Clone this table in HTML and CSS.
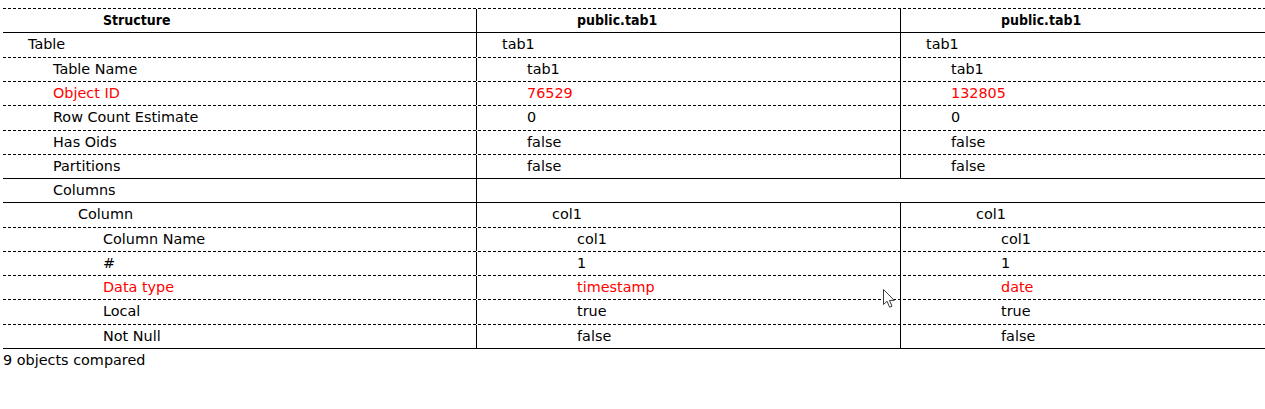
FILE: index.html
```html
<!DOCTYPE html>
<html>
<head>
<meta charset="utf-8">
<link rel="stylesheet" href="styles.css">
</head>
<body>
<div class="grid">
  <div class="row head solid">
    <div class="c c1">Structure</div>
    <div class="c c2">public.tab1</div>
    <div class="c c3">public.tab1</div>
  </div>
  <div class="row tall dashed">
    <div class="c c1 l1">Table</div>
    <div class="c c2 l1">tab1</div>
    <div class="c c3 l1">tab1</div>
  </div>
  <div class="row dashed">
    <div class="c c1 l2">Table Name</div>
    <div class="c c2 l2">tab1</div>
    <div class="c c3 l2">tab1</div>
  </div>
  <div class="row dashed diff">
    <div class="c c1 l2">Object ID</div>
    <div class="c c2 l2">76529</div>
    <div class="c c3 l2">132805</div>
  </div>
  <div class="row tall dashed">
    <div class="c c1 l2">Row Count Estimate</div>
    <div class="c c2 l2">0</div>
    <div class="c c3 l2">0</div>
  </div>
  <div class="row dashed">
    <div class="c c1 l2">Has Oids</div>
    <div class="c c2 l2">false</div>
    <div class="c c3 l2">false</div>
  </div>
  <div class="row solid">
    <div class="c c1 l2">Partitions</div>
    <div class="c c2 l2">false</div>
    <div class="c c3 l2">false</div>
  </div>
  <div class="row solid">
    <div class="c c1 l2">Columns</div>
    <div class="c c23"></div>
  </div>
  <div class="row tall dashed">
    <div class="c c1 l3">Column</div>
    <div class="c c2 l3">col1</div>
    <div class="c c3 l3">col1</div>
  </div>
  <div class="row dashed">
    <div class="c c1 l4">Column Name</div>
    <div class="c c2 l4">col1</div>
    <div class="c c3 l4">col1</div>
  </div>
  <div class="row dashed">
    <div class="c c1 l4">#</div>
    <div class="c c2 l4">1</div>
    <div class="c c3 l4">1</div>
  </div>
  <div class="row dashed diff">
    <div class="c c1 l4">Data type</div>
    <div class="c c2 l4">timestamp</div>
    <div class="c c3 l4">date</div>
  </div>
  <div class="row tall dashed">
    <div class="c c1 l4">Local</div>
    <div class="c c2 l4">true</div>
    <div class="c c3 l4">true</div>
  </div>
  <div class="row solid">
    <div class="c c1 l4">Not Null</div>
    <div class="c c2 l4">false</div>
    <div class="c c3 l4">false</div>
  </div>
</div>
<div class="footer">9 objects compared</div>
<svg class="cursor" width="16" height="22" viewBox="0 0 16 22"><path d="M1.5 1.5 L1.5 16.5 L5 13.2 L7.6 19.2 L10 18.2 L7.5 12.4 L12.3 12.4 Z" fill="#fff" stroke="#3a3a3a" stroke-width="1" stroke-linejoin="miter"/></svg>
</body>
</html>
```
FILE: styles.css
```css
html, body {
  background: #fff;
}
body {
  margin: 8px 0 0 3px;
  font-family: "DejaVu Sans", "Liberation Sans", sans-serif;
  font-size: 14.4px;
  color: #000;
  position: relative;
}
.grid {
  width: 1262px;
  display: flex;
  flex-direction: column;
  padding-top: 1px;
  background-image: repeating-linear-gradient(90deg, #000 0 3px, transparent 3px 5px);
  background-size: 100% 1px;
  background-repeat: no-repeat;
  background-position: left top;
}
.row {
  display: flex;
  height: 24px;
  box-sizing: border-box;
}
.row.tall {
  height: 25px;
}
.row.solid {
  border-bottom: 1px solid #000;
}
.row.dashed {
  padding-bottom: 1px;
  background-image: repeating-linear-gradient(90deg, #000 0 3px, transparent 3px 5px);
  background-size: 100% 1px;
  background-repeat: no-repeat;
  background-position: left bottom;
}
.c {
  display: flex;
  align-items: center;
  box-sizing: border-box;
  white-space: nowrap;
  padding-bottom: 2px;
}
.c1 {
  width: 473px;
}
.c2 {
  width: 424px;
  border-left: 1px solid #000;
}
.c3 {
  width: 365px;
  border-left: 1px solid #000;
}
.c23 {
  width: 789px;
  border-left: 1px solid #000;
}
.head .c {
  font-weight: bold;
  font-size: 14px;
  font-family: "DejaVu Sans Condensed", "DejaVu Sans", sans-serif;
  font-stretch: condensed;
  padding-left: 100px;
}
.l1 { padding-left: 25px; }
.l2 { padding-left: 50px; }
.l3 { padding-left: 75px; }
.l4 { padding-left: 100px; }
.diff .c {
  color: #f00;
}
.footer {
  padding-top: 2px;
  line-height: 18px;
}
.cursor {
  position: absolute;
  left: 879px;
  top: 280px;
}
```
